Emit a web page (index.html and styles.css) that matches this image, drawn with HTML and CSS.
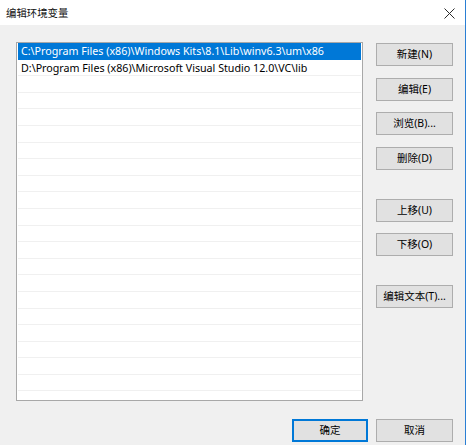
FILE: index.html
```html
<!DOCTYPE html>
<html lang="zh-CN">
<head>
<meta charset="utf-8">
<title>编辑环境变量</title>
<link rel="stylesheet" href="styles.css">
</head>
<body>
<div class="window">
  <div class="titlebar">
    <span class="title">编辑环境变量</span>
    <span class="close" aria-label="关闭">
      <svg width="11" height="11" viewBox="0 0 11 11"><path d="M0.5 0.5 L10.5 10.5 M10.5 0.5 L0.5 10.5" stroke="#2b2b2b" stroke-width="1" fill="none"/></svg>
    </span>
  </div>
  <div class="content">
    <div class="main">
      <div class="list">
        <div class="row selected">C:\Program Files (x86)\Windows Kits\8.1\Lib\winv6.3\um\x86</div>
        <div class="row">D:\Program Files (x86)\Microsoft Visual Studio 12.0\VC\lib</div>
        <div class="row"></div><div class="row"></div><div class="row"></div><div class="row"></div>
        <div class="row"></div><div class="row"></div><div class="row"></div><div class="row"></div>
        <div class="row"></div><div class="row"></div><div class="row"></div><div class="row"></div>
        <div class="row"></div><div class="row"></div><div class="row"></div><div class="row"></div>
        <div class="row"></div><div class="row"></div><div class="row"></div>
      </div>
      <div class="side">
        <button class="btn">新建(N)</button>
        <button class="btn">编辑(E)</button>
        <button class="btn">浏览(B)...</button>
        <button class="btn">删除(D)</button>
        <button class="btn sep">上移(U)</button>
        <button class="btn">下移(O)</button>
        <button class="btn sep">编辑文本(T)...</button>
      </div>
    </div>
    <div class="footer">
      <button class="btn default">确定</button>
      <button class="btn">取消</button>
    </div>
  </div>
</div>
</body>
</html>
```
FILE: styles.css
```css
html, body {
  margin: 0;
  padding: 0;
}
body {
  width: 466px;
  height: 445px;
  overflow: hidden;
  background: #f0f0f0;
  font-family: "Noto Sans", "Noto Sans CJK SC", sans-serif;
  color: #000;
}
.window {
  box-sizing: border-box;
  width: 466px;
  height: 445px;
  border-right: 1px solid #2a7fd4;
  background: #f0f0f0;
}
.titlebar {
  height: 25px;
  background: #fff;
  display: flex;
  align-items: center;
  justify-content: space-between;
  padding: 0 10px 0 6px;
}
.title {
  font-family: "Noto Sans CJK SC", sans-serif;
  font-size: 10.4px;
  line-height: 1;
  color: #111;
  margin-top: 1px;
}
.close {
  display: flex;
  width: 11px;
  height: 11px;
  margin-top: 1px;
}
.content {
  padding: 17px 12px 0 16px;
}
.main {
  display: flex;
  gap: 13px;
}
.list {
  box-sizing: border-box;
  width: 348px;
  height: 359px;
  border: 1px solid #a8a8a8;
  background: #fff;
  padding: 0 1px;
  overflow: hidden;
}
.row {
  box-sizing: border-box;
  height: 16.6px;
  border-bottom: 1px solid #f0f0f0;
  font-size: 10.7px;
  line-height: 16px;
  padding-left: 3px;
  white-space: nowrap;
  overflow: hidden;
  color: #000;
}
.row.selected {
  background: #0078d7;
  color: #fff;
  border-bottom-color: #0078d7;
}
.side {
  display: flex;
  flex-direction: column;
  gap: 11.5px;
  padding-top: 1px;
}
.btn {
  box-sizing: border-box;
  width: 77px;
  height: 23px;
  margin: 0;
  padding: 0;
  background: #e1e1e1;
  border: 1px solid #adadad;
  font-family: "Noto Sans", "Noto Sans CJK SC", sans-serif;
  font-size: 10.5px;
  color: #000;
  line-height: 1;
}
.btn.sep {
  margin-top: 17.5px;
}
.btn.default {
  width: 76px;
  border: 2px solid #0078d7;
}
.footer {
  display: flex;
  justify-content: flex-end;
  gap: 8px;
  margin-top: 18px;
}
```
